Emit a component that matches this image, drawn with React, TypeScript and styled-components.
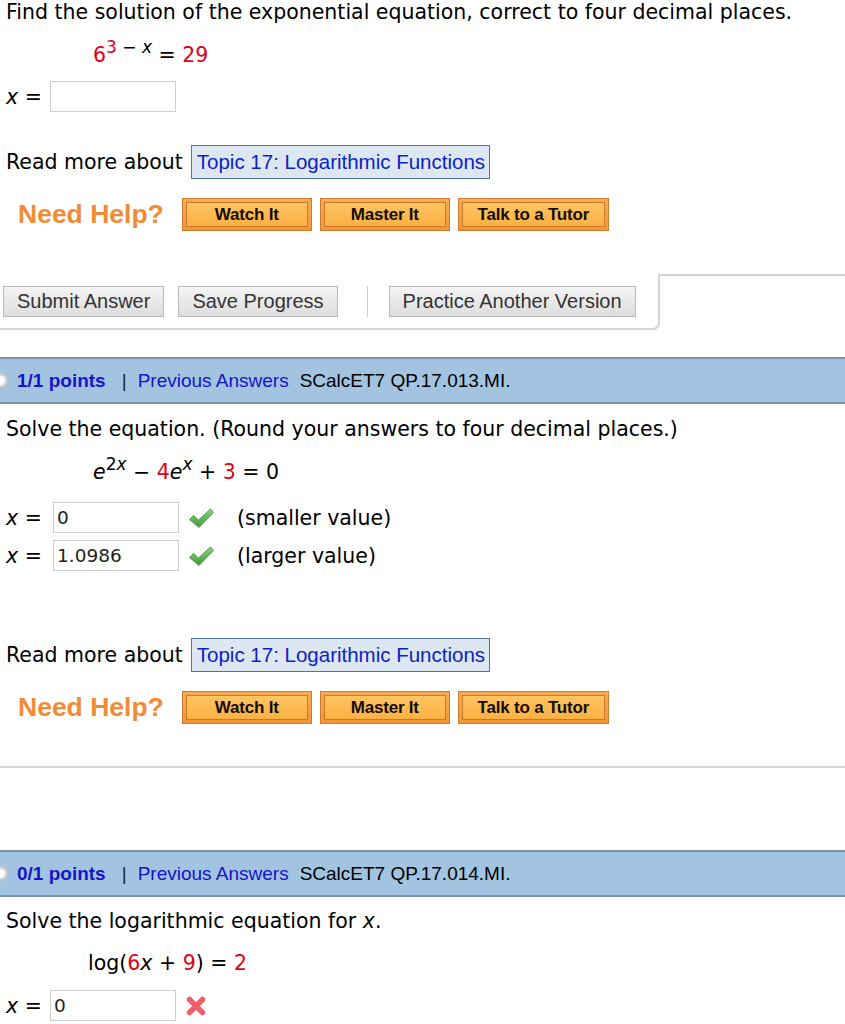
import styled, { createGlobalStyle } from 'styled-components';

const GlobalStyle = createGlobalStyle`
  body {
    margin: 0;
    background: #fff;
    color: #000;
    font-family: "DejaVu Sans", Verdana, sans-serif;
    font-size: 20.5px;
  }
`;

type Spaced = { $mt?: number };

const Page = styled.div`
  width: 845px;
  overflow: hidden;
`;

const Prompt = styled.p<Spaced>`
  margin: ${p => p.$mt ?? 0}px 0 0 6px;
  line-height: 24px;
  white-space: nowrap;
`;

const Equation = styled.div<Spaced & { $indent: number }>`
  margin: ${p => p.$mt ?? 0}px 0 0 ${p => p.$indent}px;
  height: 24px;
  line-height: 24px;
  white-space: nowrap;
`;

const Red = styled.span`
  color: #e0001b;
`;

const Var = styled.i`
  font-style: oblique;
`;

const Sup = styled.sup`
  font-size: 17px;
  vertical-align: 9px;
  line-height: 0;
`;

const AnswerRow = styled.div<Spaced>`
  display: flex;
  align-items: center;
  margin: ${p => p.$mt ?? 0}px 0 0 6px;
  height: 31px;
`;

const Label = styled.span<{ $w: number }>`
  width: ${p => p.$w}px;
  flex: none;
`;

const Field = styled.input`
  width: 126px;
  height: 31px;
  box-sizing: border-box;
  border: 1px solid #cfcfcf;
  padding: 0 3px;
  font: 18.5px "DejaVu Sans", Verdana, sans-serif;
  color: #222;
  outline: none;
`;

const Mark = styled.span`
  display: flex;
  margin-left: 9px;
`;

const Note = styled.span`
  margin-left: 22px;
`;

const ReadRow = styled.div<Spaced>`
  display: flex;
  align-items: center;
  margin: ${p => p.$mt ?? 0}px 0 0 6px;
  height: 34px;
`;

const TopicLink = styled.a`
  display: flex;
  align-items: center;
  height: 34px;
  box-sizing: border-box;
  margin-left: 8px;
  padding: 0 4px 0 5px;
  background: #dde7f1;
  border: 1px solid #4f74a0;
  color: #0b1fc8;
  font: 20.5px "Liberation Sans", Arial, sans-serif;
  text-decoration: none;
`;

const HelpRow = styled.div<Spaced>`
  display: flex;
  align-items: center;
  gap: 8px;
  margin: ${p => p.$mt ?? 0}px 0 0 18px;
  height: 33px;
`;

const NeedHelp = styled.span`
  margin-right: 10px;
  color: #f08c35;
  font: bold 26.5px "Liberation Sans", Arial, sans-serif;
`;

const HelpButton = styled.button<{ $w: number }>`
  width: ${p => p.$w}px;
  height: 33px;
  box-sizing: border-box;
  padding: 3px;
  border: 1px solid #d27b2c;
  background: linear-gradient(#f7ab55, #f29736);
  cursor: pointer;
`;

const HelpFace = styled.span`
  display: flex;
  align-items: center;
  justify-content: center;
  height: 100%;
  box-sizing: border-box;
  border: 1px solid #c57a2c;
  background: linear-gradient(#ffc461, #fbb044);
  color: #140d02;
  font: bold 17px "Liberation Sans", Arial, sans-serif;
  letter-spacing: -0.2px;
`;

const Panel = styled.div<Spaced>`
  display: flex;
  margin-top: ${p => p.$mt ?? 0}px;
`;

const PanelTools = styled.div`
  display: flex;
  align-items: center;
  padding: 12px 22px 11px 3px;
  border-bottom: 2px solid #d3d3d3;
  border-right: 2px solid #d3d3d3;
  border-bottom-right-radius: 7px;
`;

const PanelRest = styled.div`
  flex: 1;
  border-top: 2px solid #d3d3d3;
`;

const ActionButton = styled.button<{ $ml?: number }>`
  height: 31px;
  box-sizing: border-box;
  margin-left: ${p => p.$ml ?? 0}px;
  padding: 0 13px;
  border: 1px solid #b9b9b9;
  background: linear-gradient(#f5f5f5, #dddddd);
  color: #333;
  font: 20px "Liberation Sans", Arial, sans-serif;
  cursor: pointer;
`;

const Divider = styled.span`
  width: 1px;
  height: 31px;
  margin-left: 29px;
  background: #cccccc;
`;

const ScoreBar = styled.div<Spaced>`
  display: flex;
  align-items: center;
  height: 47px;
  box-sizing: border-box;
  margin-top: ${p => p.$mt ?? 0}px;
  background: #a2c4e0;
  border-top: 2px solid #7a91a6;
  border-bottom: 2px solid #7a91a6;
  font: 19px "Liberation Sans", Arial, sans-serif;
  white-space: nowrap;
`;

const Dot = styled.span`
  width: 15px;
  height: 15px;
  margin: 0 9px 0 -7px;
  box-sizing: border-box;
  border-radius: 50%;
  border: 2px solid #c9c9c9;
  background: radial-gradient(#ffffff 35%, #e4e4e4 70%);
`;

const Points = styled.b`
  color: #1616c4;
`;

const Pipe = styled.span`
  margin: 0 11px 0 16px;
  color: #222;
`;

const PrevLink = styled.a`
  color: #1414c8;
  text-decoration: none;
`;

const Code = styled.span`
  margin-left: 11px;
  color: #000;
`;

const Rule = styled.hr<Spaced>`
  margin: ${p => p.$mt ?? 0}px 0 0;
  height: 2px;
  border: none;
  background: #d6d6d6;
`;

function Check() {
  return (
    <svg width="27" height="22" viewBox="0 0 27 22">
      <defs>
        <linearGradient id="chk" x1="0" y1="0" x2="0" y2="1">
          <stop offset="0" stopColor="#8fd07f" />
          <stop offset="1" stopColor="#3f9a3c" />
        </linearGradient>
      </defs>
      <path
        d="M1.5 12.5 L5.5 8.5 L10.5 13 L22.5 2 L25.5 5.5 L11 20.5 Z"
        fill="url(#chk)"
        stroke="#4d9f46"
        strokeWidth="1"
        strokeLinejoin="round"
      />
    </svg>
  );
}

function Cross() {
  return (
    <svg width="22" height="22" viewBox="0 0 22 22">
      <path
        d="M4.5 4.5 L17.5 17.5 M17.5 4.5 L4.5 17.5"
        stroke="#f0606b"
        strokeWidth="5.5"
        strokeLinecap="round"
      />
    </svg>
  );
}

function ReadMore({ mt }: { mt: number }) {
  return (
    <ReadRow $mt={mt}>
      <span>Read more about</span>
      <TopicLink href="#">Topic 17: Logarithmic Functions</TopicLink>
    </ReadRow>
  );
}

function NeedHelpRow({ mt }: { mt: number }) {
  return (
    <HelpRow $mt={mt}>
      <NeedHelp>Need Help?</NeedHelp>
      <HelpButton $w={130}>
        <HelpFace>Watch It</HelpFace>
      </HelpButton>
      <HelpButton $w={130}>
        <HelpFace>Master It</HelpFace>
      </HelpButton>
      <HelpButton $w={151}>
        <HelpFace>Talk to a Tutor</HelpFace>
      </HelpButton>
    </HelpRow>
  );
}

function Score({ mt, points, code }: { mt: number; points: string; code: string }) {
  return (
    <ScoreBar $mt={mt}>
      <Dot />
      <Points>{points}</Points>
      <Pipe>|</Pipe>
      <PrevLink href="#">Previous Answers</PrevLink>
      <Code>{code}</Code>
    </ScoreBar>
  );
}

export default function App() {
  return (
    <Page>
      <GlobalStyle />

      <Prompt>Find the solution of the exponential equation, correct to four decimal places.</Prompt>
      <Equation $mt={19} $indent={93}>
        <Red>6</Red>
        <Sup>
          <Red>3</Red> − <Var>x</Var>
        </Sup>{' '}
        = <Red>29</Red>
      </Equation>
      <AnswerRow $mt={14}>
        <Label $w={44}>
          <Var>x</Var> =
        </Label>
        <Field defaultValue="" />
      </AnswerRow>
      <ReadMore mt={33} />
      <NeedHelpRow mt={19} />

      <Panel $mt={43}>
        <PanelTools>
          <ActionButton>Submit Answer</ActionButton>
          <ActionButton $ml={14}>Save Progress</ActionButton>
          <Divider />
          <ActionButton $ml={21}>Practice Another Version</ActionButton>
        </PanelTools>
        <PanelRest />
      </Panel>

      <Score mt={27} points="1/1 points" code="SCalcET7 QP.17.013.MI." />
      <Prompt $mt={13}>Solve the equation. (Round your answers to four decimal places.)</Prompt>
      <Equation $mt={19} $indent={93}>
        <Var>e</Var>
        <Sup>
          2<Var>x</Var>
        </Sup>{' '}
        − <Red>4</Red>
        <Var>e</Var>
        <Sup>
          <Var>x</Var>
        </Sup>{' '}
        + <Red>3</Red> = 0
      </Equation>
      <AnswerRow $mt={18}>
        <Label $w={47}>
          <Var>x</Var> =
        </Label>
        <Field defaultValue="0" />
        <Mark>
          <Check />
        </Mark>
        <Note>(smaller value)</Note>
      </AnswerRow>
      <AnswerRow $mt={7}>
        <Label $w={47}>
          <Var>x</Var> =
        </Label>
        <Field defaultValue="1.0986" />
        <Mark>
          <Check />
        </Mark>
        <Note>(larger value)</Note>
      </AnswerRow>
      <ReadMore mt={67} />
      <NeedHelpRow mt={19} />
      <Rule $mt={42} />

      <Score mt={82} points="0/1 points" code="SCalcET7 QP.17.014.MI." />
      <Prompt $mt={12}>
        Solve the logarithmic equation for <Var>x</Var>.
      </Prompt>
      <Equation $mt={18} $indent={88}>
        log(<Red>6</Red>
        <Var>x</Var> + <Red>9</Red>) = <Red>2</Red>
      </Equation>
      <AnswerRow $mt={15}>
        <Label $w={44}>
          <Var>x</Var> =
        </Label>
        <Field defaultValue="0" />
        <Mark>
          <Cross />
        </Mark>
      </AnswerRow>
    </Page>
  );
}
